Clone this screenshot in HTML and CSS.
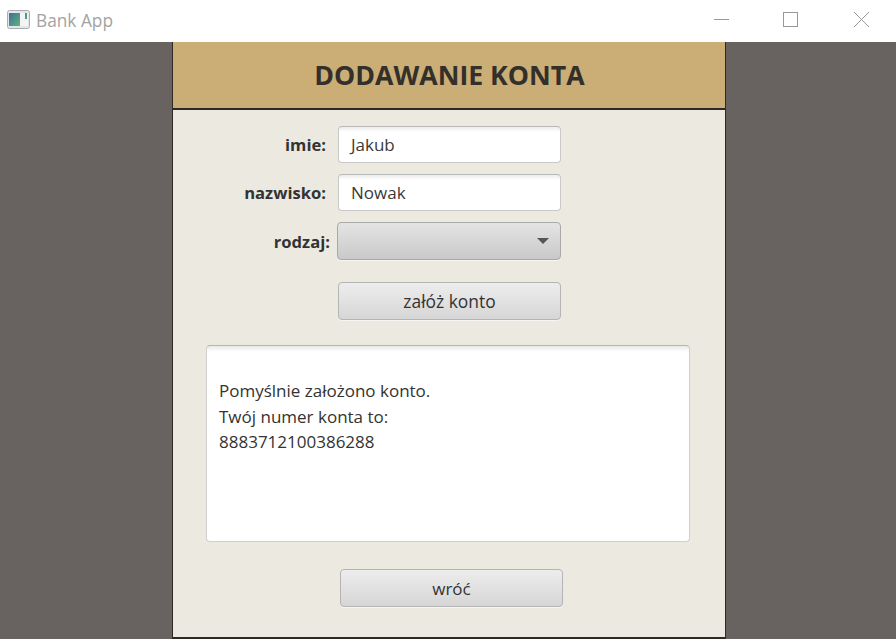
FILE: index.html
```html
<!DOCTYPE html>
<html lang="pl">
<head>
<meta charset="utf-8">
<title>Bank App</title>
<link rel="stylesheet" href="styles.css">
</head>
<body>
<header class="titlebar">
  <svg class="app-icon" width="24" height="20" viewBox="0 0 24 20">
    <defs><linearGradient id="g" x1="0" y1="0" x2="1" y2="1"><stop offset="0" stop-color="#3f6f96"/><stop offset="1" stop-color="#5fb27c"/></linearGradient></defs>
    <rect x="0.5" y="0.5" width="22" height="18" rx="2" fill="#e4e6e8" stroke="#a9adb2"/>
    <rect x="2" y="3" width="11" height="13" fill="url(#g)"/>
    <rect x="13" y="3" width="8" height="13" fill="#f3f5f4"/>
    <rect x="18" y="3" width="2" height="6" fill="#4f9a80"/>
  </svg>
  <span class="app-title">Bank App</span>
  <div class="win-controls">
    <svg width="15" height="15" viewBox="0 0 15 15"><path d="M0 7.5H15" stroke="#999" fill="none"/></svg>
    <svg class="win-max" width="15" height="15" viewBox="0 0 15 15"><rect x="0.5" y="0.5" width="14" height="14" stroke="#999" fill="none"/></svg>
    <svg width="15" height="15" viewBox="0 0 15 15"><path d="M0 0L15 15M15 0L0 15" stroke="#999" fill="none"/></svg>
  </div>
</header>
<main class="stage">
  <section class="panel">
    <h1 class="heading">DODAWANIE KONTA</h1>
    <div class="content">
      <div class="row">
        <label class="label">imie:</label>
        <div class="field">Jakub</div>
      </div>
      <div class="row">
        <label class="label">nazwisko:</label>
        <div class="field">Nowak</div>
      </div>
      <div class="row row-select">
        <label class="label">rodzaj:</label>
        <div class="select"><span class="arrow"></span></div>
      </div>
      <div class="row row-submit">
        <button class="btn">załóż konto</button>
      </div>
      <div class="output">Pomyślnie założono konto.<br>Twój numer konta to:<br>8883712100386288</div>
      <div class="row-back">
        <button class="btn btn-back">wróć</button>
      </div>
    </div>
  </section>
</main>
</body>
</html>
```
FILE: styles.css
```css
* { box-sizing: border-box; }
html, body { margin: 0; height: 100%; }
body {
  width: 896px;
  height: 639px;
  overflow: hidden;
  display: flex;
  flex-direction: column;
  font-family: "Open Sans", "Noto Sans", sans-serif;
  color: #333;
  background: #686360;
}
.titlebar {
  height: 42px;
  flex: none;
  background: #fff;
  display: flex;
  align-items: center;
  padding-left: 7px;
}
.app-icon { margin-top: -3px; margin-right: 5px; }
.app-title { font-size: 17.3px; color: #a3a3a3; margin-top: -1px; }
.win-controls {
  margin-left: auto;
  display: flex;
  gap: 55px;
  padding-right: 27px;
  margin-top: -3px;
}
.win-max { margin-left: -1px; margin-right: 1px; }
.stage { flex: 1; display: flex; justify-content: center; padding-left: 2px; }
.panel {
  width: 554px;
  height: 597px;
  background: #ece9e1;
  border: solid #2d2a26;
  border-width: 0 1px 2px 1px;
  display: flex;
  flex-direction: column;
}
.heading {
  margin: 0;
  height: 68px;
  flex: none;
  background: #cbad76;
  border-bottom: 2px solid #2d2a26;
  font-size: 26.7px;
  font-weight: 700;
  color: #332f2a;
  display: flex;
  align-items: center;
  justify-content: center;
  padding-bottom: 1px;
  padding-left: 1px;
}
.content { padding-top: 16px; display: flex; flex-direction: column; }
.row { display: flex; align-items: center; height: 37px; margin-bottom: 11px; }
.label {
  width: 153px;
  text-align: right;
  font-size: 16.6px;
  font-weight: 700;
  color: #333;
  flex: none;
  margin-right: 12px;
}
.field {
  width: 223px;
  height: 37px;
  background: linear-gradient(#ececec 0, #fff 5px);
  border: 1px solid #c8c8c8;
  border-top-color: #b8b8b8;
  border-radius: 4px;
  padding-left: 12px;
  font-size: 17px;
  line-height: 36px;
  color: #3a3a3a;
}
.row-select { height: 38px; margin-bottom: 22px; }
.row-select .label { width: 157px; margin-right: 7px; }
.select {
  width: 224px;
  height: 38px;
  border: 1px solid #a9a9a9;
  border-radius: 4px;
  background: linear-gradient(#e4e4e4, #c9c9c9);
  position: relative;
  box-shadow: 0 1px 0 #f7f5f1;
}
.arrow {
  position: absolute;
  right: 11px;
  top: 15px;
  border-left: 6px solid transparent;
  border-right: 6px solid transparent;
  border-top: 6px solid #555;
}
.row-submit { padding-left: 165px; height: 38px; margin-bottom: 25px; }
.btn {
  width: 223px;
  height: 38px;
  padding: 0;
  border: 1px solid #b4b4b4;
  border-radius: 4px;
  background: linear-gradient(#ededed, #d6d6d6);
  box-shadow: 0 1px 0 #f7f5f1;
  font-family: inherit;
  font-size: 17.4px;
  color: #333;
}
.btn-back { font-size: 17px; }
.output {
  margin-left: 33px;
  width: 484px;
  height: 197px;
  background: linear-gradient(#e9e9e9 0, #fff 6px);
  border: 1px solid #cfcfcf;
  border-top-color: #b5b5b5;
  border-radius: 4px;
  padding: 32px 12px 0;
  font-size: 17px;
  line-height: 25.5px;
  color: #333;
}
.row-back { margin-top: 27px; padding-left: 167px; }
```
